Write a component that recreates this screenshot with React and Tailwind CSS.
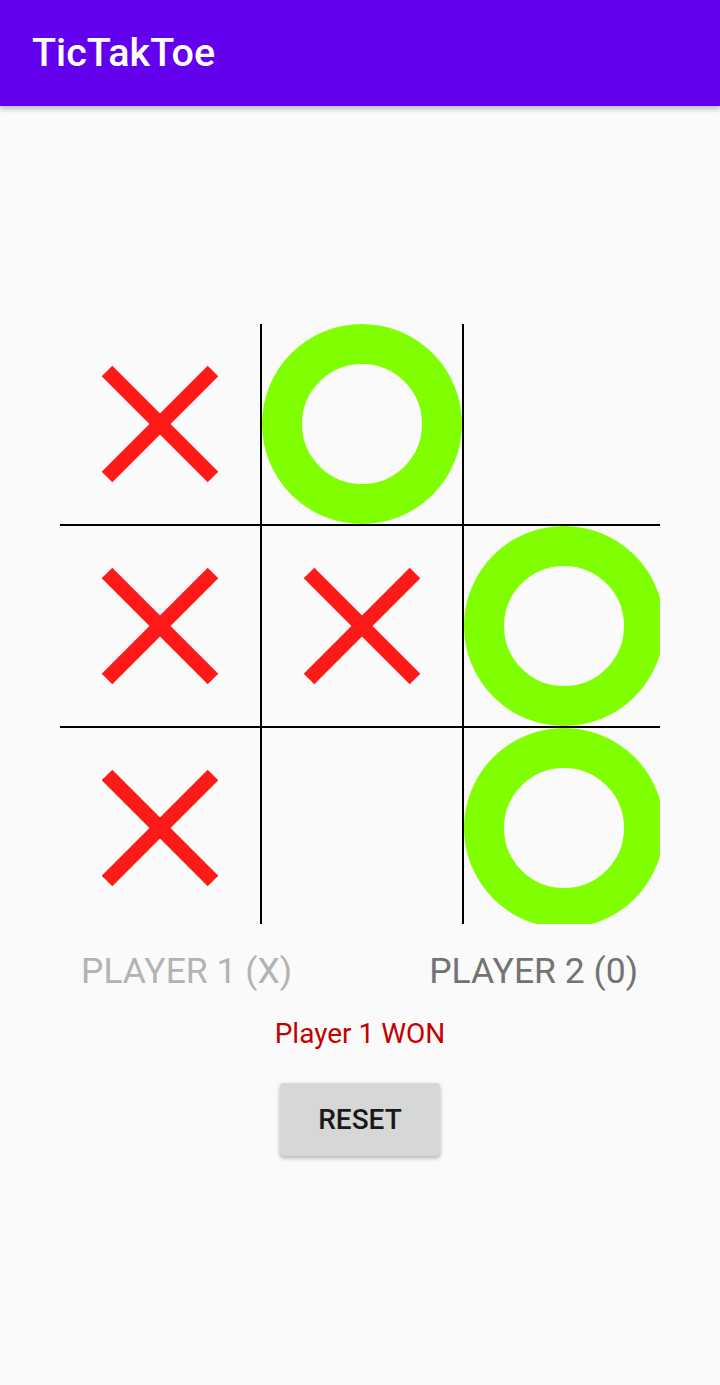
import React from 'react';

const board = [
  ['x', 'o', ''],
  ['x', 'x', 'o'],
  ['x', '', 'o'],
];

const Cross = () => (
  <svg width="200" height="200" viewBox="0 0 200 200" className="shrink-0">
    <line x1="47" y1="47" x2="153" y2="153" stroke="#ff1a1a" strokeWidth="15" />
    <line x1="153" y1="47" x2="47" y2="153" stroke="#ff1a1a" strokeWidth="15" />
  </svg>
);

const Ring = () => (
  <div className="w-[200px] h-[200px] shrink-0 rounded-full border-[40px] border-[#80ff00]" />
);

const App = () => {
  return (
    <div className="min-h-[1385px] bg-[#fafafa] font-['Roboto',sans-serif]">
      {/* Toolbar */}
      <header className="h-[106px] bg-[#6200ee] flex items-center px-[32px] shadow-[0_3px_5px_rgba(0,0,0,0.25)]">
        <h1 className="text-white text-[39.5px] font-medium leading-none">TicTakToe</h1>
      </header>

      {/* Board */}
      <div className="mt-[218px] mx-[60px] w-[600px] h-[600px] grid grid-cols-[202px_202px_196px] grid-rows-[202px_202px_196px] overflow-hidden">
        {board.map((row, r) =>
          row.map((cell, c) => (
            <div
              key={`${r}-${c}`}
              className={`overflow-hidden flex ${c < 2 ? 'border-r-2' : ''} ${r < 2 ? 'border-b-2' : ''} border-black ${c < 2 ? 'justify-center' : 'justify-start'} ${r < 2 ? 'items-center' : 'items-start'}`}
            >
              {cell === 'x' && <Cross />}
              {cell === 'o' && <Ring />}
            </div>
          ))
        )}
      </div>

      {/* Players */}
      <div className="flex justify-between pl-[81px] pr-[82px] mt-[29px]">
        <span className="text-[35.5px] leading-[36px] text-[#b3b3b3]">PLAYER 1 (X)</span>
        <span className="text-[35.5px] leading-[36px] text-[#737373]">PLAYER 2 (0)</span>
      </div>

      <p className="text-center text-[28px] leading-none text-[#c40000] mt-[31px]">Player 1 WON</p>

      <div className="flex justify-center mt-[35px]">
        <button className="w-[160px] h-[73px] rounded-[4px] bg-[#d6d7d7] text-[28px] font-medium text-[#1a1a1a] shadow-[0_2px_4px_rgba(0,0,0,0.3)]">
          RESET
        </button>
      </div>
    </div>
  );
};

export default App;
